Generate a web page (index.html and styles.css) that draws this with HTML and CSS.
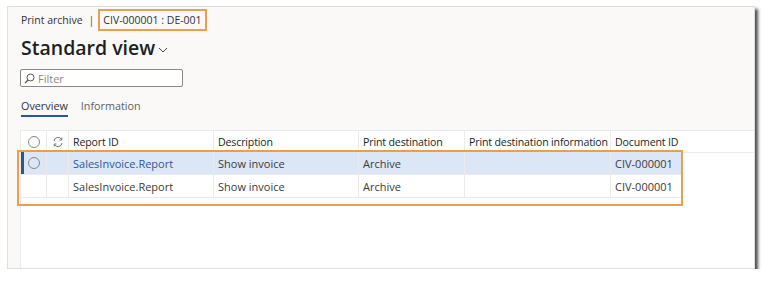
FILE: index.html
```html
<!DOCTYPE html>
<html>
<head>
<meta charset="utf-8">
<link rel="stylesheet" href="styles.css">
</head>
<body>
<div class="window">
  <div class="crumbs">
    <span class="crumb">Print archive</span>
    <span class="sep">|</span>
    <span class="crumb-hl">CIV-000001 : DE-001</span>
  </div>
  <div class="title">
    <span>Standard view</span>
    <svg class="chev" width="10" height="6" viewBox="0 0 10 6"><path d="M1 1 L5 5 L9 1" fill="none" stroke="#444" stroke-width="1"/></svg>
  </div>
  <div class="filter">
    <svg class="search" width="11" height="11" viewBox="0 0 11 11"><circle cx="6.5" cy="4.5" r="3.5" fill="none" stroke="#555" stroke-width="1"/><path d="M4 7 L1 10" stroke="#555" stroke-width="1.2"/></svg>
    <span class="ph">Filter</span>
  </div>
  <div class="tabs">
    <span class="tab active">Overview</span>
    <span class="tab">Information</span>
  </div>
  <div class="grid">
    <div class="row head">
      <div class="c c0"><span class="radio"></span></div>
      <div class="c c1"><svg width="12" height="12" viewBox="0 0 12 12"><path d="M2 5 A4 4 0 0 1 9.5 3.5" fill="none" stroke="#777" stroke-width="1"/><path d="M10 7 A4 4 0 0 1 2.5 8.5" fill="none" stroke="#777" stroke-width="1"/><path d="M9.8 1.5 L9.8 4 L7.5 4" fill="none" stroke="#777" stroke-width="1"/><path d="M2.2 10.5 L2.2 8 L4.5 8" fill="none" stroke="#777" stroke-width="1"/></svg></div>
      <div class="c c2">Report ID</div>
      <div class="c c3">Description</div>
      <div class="c c4">Print destination</div>
      <div class="c c5">Print destination information</div>
      <div class="c c6">Document ID</div>
    </div>
    <div class="hl">
      <div class="row sel">
        <div class="c c0"><span class="radio"></span></div>
        <div class="c c1"></div>
        <div class="c c2 link">SalesInvoice.Report</div>
        <div class="c c3">Show invoice</div>
        <div class="c c4">Archive</div>
        <div class="c c5"></div>
        <div class="c c6">CIV-000001</div>
      </div>
      <div class="row">
        <div class="c c0"></div>
        <div class="c c1"></div>
        <div class="c c2">SalesInvoice.Report</div>
        <div class="c c3">Show invoice</div>
        <div class="c c4">Archive</div>
        <div class="c c5"></div>
        <div class="c c6">CIV-000001</div>
      </div>
    </div>
  </div>
</div>
</body>
</html>
```
FILE: styles.css
```css
* { box-sizing: border-box; }
body {
  margin: 0;
  background: #ffffff;
  font-family: "Open Sans", "Noto Sans", sans-serif;
  color: #323130;
}
.window {
  margin: 6px 0 0 7px;
  width: 748px;
  height: 263px;
  background: #faf9f8;
  border: 1px solid #e1dfdd;
  box-shadow: 3px 3px 3px #505050;
  padding: 2px 0 0 13px;
  display: flex;
  flex-direction: column;
}
.crumbs {
  display: flex;
  align-items: center;
  font-size: 10.5px;
  height: 22px;
  color: #323130;
}
.sep { margin: 0 4px 0 6px; color: #555; }
.crumb-hl {
  border: 2px solid #e8a050;
  padding: 1px 3px;
  height: 22px;
  display: flex;
  align-items: center;
}
.title {
  margin-top: 2px;
  font-size: 19.5px;
  font-weight: 600;
  color: #201f1e;
  display: flex;
  align-items: center;
  height: 29px;
}
.chev { margin: 4px 0 0 3px; }
.filter {
  margin-top: 7px;
  margin-left: -1px;
  width: 163px;
  height: 18px;
  border: 1px solid #8a8886;
  border-radius: 2px;
  background: #fff;
  display: flex;
  align-items: center;
  padding-left: 3px;
  font-size: 11px;
}
.search { margin-right: 3px; }
.ph { color: #8a8886; }
.tabs {
  margin-top: 11px;
  display: flex;
  gap: 13px;
  font-size: 10.8px;
  height: 19px;
}
.tab { color: #605e5c; height: 19px; line-height: 15px; }
.tab.active { color: #323130; border-bottom: 2px solid #2b5797; }
.grid {
  margin-top: 13px;
  margin-left: -1px;
  flex: 1;
  background: #fff;
  border-top: 1px solid #edebe9;
  border-left: 1px solid #edebe9;
  font-size: 11px;
}
.row {
  display: flex;
  height: 22px;
  border-bottom: 1px solid #edebe9;
}
.row.sel, .hl .row { height: 23px; }
.row.head { font-weight: 500; font-size: 10.6px; color: #201f1e; letter-spacing: -0.15px; }
.row.sel { background: #dbe6f7; box-shadow: inset 3px 0 0 #2b5797; }
.hl {
  outline: 2px solid #e8a050;
  width: 662px;
  margin-left: -2px;
  padding-left: 2px;
  padding-bottom: 6px;
  margin-top: -1px;
}
.c {
  display: flex;
  align-items: center;
  padding-left: 4px;
  border-right: 1px solid #edebe9;
  white-space: nowrap;
  overflow: hidden;
}
.c0 { width: 26px; justify-content: center; padding-left: 0; }
.c1 { width: 22px; justify-content: center; padding-left: 0; }
.c2 { width: 145px; }
.c3 { width: 145px; }
.c4 { width: 106px; }
.c5 { width: 146px; }
.c6 { flex: 1; border-right: none; }
.row:not(.head) .c { color: #3b3a39; }
.row:not(.head) .c.link { color: #2b5797; }
.radio {
  width: 12px;
  height: 12px;
  border: 1px solid #8a8886;
  border-radius: 50%;
}
```
